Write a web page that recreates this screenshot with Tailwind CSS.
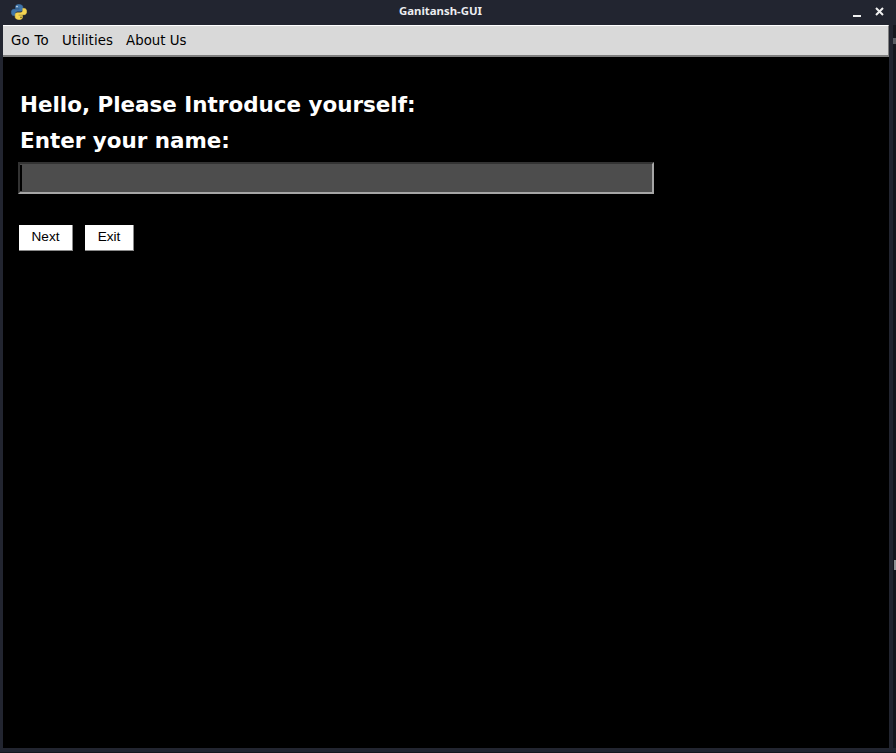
<!DOCTYPE html>
<html lang="en">
<head>
    <meta charset="UTF-8">
    <title>Ganitansh-GUI</title>
    <script src="https://cdn.jsdelivr.net/npm/@tailwindcss/browser@4"></script>
</head>
<body class="bg-[#1d2029] overflow-hidden">
    <div class="w-[896px] h-[753px] flex flex-col">
        <!-- title bar -->
        <div class="h-[25px] shrink-0 bg-[#222530] pr-[3px] relative flex items-center">
            <svg class="ml-[11px] mb-[2px] w-[16px] h-[16px]" viewBox="0 0 16 16">
                <path fill="#3f74a8" stroke="#3f74a8" stroke-width=".6" d="M8 0.5C5 0.5 4.6 1.6 4.6 3v1.6H8.2v.7H3C1.3 5.3.4 6.5.4 8.4c0 2 .9 3.2 2.4 3.2h1.4V9.7c0-1.4 1.1-2.5 2.6-2.5h3c1.2 0 2-.9 2-2V3c0-1.4-1.4-2.5-3.8-2.5z"/>
                <path fill="#f5d552" stroke="#f5d552" stroke-width=".6" d="M8 15.5c3 0 3.4-1.1 3.4-2.5v-1.6H7.8v-.7H13c1.7 0 2.6-1.2 2.6-3.1 0-2-.9-3.2-2.4-3.2h-1.4v1.9c0 1.4-1.1 2.5-2.6 2.5h-3c-1.2 0-2 .9-2 2V13c0 1.4 1.4 2.5 3.8 2.5z"/>
                <circle cx="6" cy="2.6" r=".8" fill="#dfe8f0"/>
                <circle cx="10" cy="13.4" r=".8" fill="#6b5d20"/>
            </svg>
            <span class="absolute left-0 w-[881px] text-center top-[3px] text-[11.4px] leading-[15px] font-bold text-[#eceef1] font-['Noto_Sans',sans-serif]">Ganitansh-GUI</span>
            <div class="ml-auto flex items-center gap-[13px] mr-[9px] mb-[2px]">
                <svg class="w-[9px] h-[9px] mt-[3px]" viewBox="0 0 9 9"><rect x="0" y="6" width="8" height="2" fill="#f0f0f0"/></svg>
                <svg class="w-[9px] h-[9px]" viewBox="0 0 9 9"><path d="M1 1l7 7M8 1l-7 7" stroke="#f0f0f0" stroke-width="2" fill="none"/></svg>
            </div>
        </div>

        <div class="flex-1 min-h-0 flex">
            <div class="w-[3px] bg-[#222530] shrink-0"></div>

            <!-- window -->
            <div class="w-[886px] shrink-0 flex flex-col bg-black">
                <div class="h-[32px] shrink-0 bg-[#d9d9d9] border-t border-t-white border-b-2 border-b-[#7f7f7f] border-r border-r-[#7f7f7f] flex items-center pl-[8px] gap-[13px] text-[13.33px] text-black font-['DejaVu_Sans',sans-serif]">
                    <span class="tracking-[0.25px]">Go To</span>
                    <span class="tracking-[0.1px]">Utilities</span>
                    <span>About Us</span>
                </div>

                <div class="flex-1 pl-[15px] pt-[33px] font-['DejaVu_Sans',sans-serif]">
                    <p class="pl-[2px] h-[36px] text-[21.45px] leading-[30px] font-bold text-white">Hello, Please Introduce yourself:</p>
                    <p class="pl-[2px] h-[36px] text-[21.45px] leading-[30px] font-bold text-white">Enter your name:</p>
                    <div class="relative w-[636px] h-[32px]">
                        <input type="text" class="block w-full h-full bg-[#4d4d4d] border-2 border-t-[#333333] border-l-[#333333] border-r-[#a6a6a6] border-b-[#a6a6a6] outline-none">
                        <span class="absolute left-[2px] top-[3px] w-[2px] h-[26px] bg-black"></span>
                    </div>
                    <div class="flex gap-[12px] mt-[31px] ml-[1px] font-['Liberation_Sans',sans-serif]">
                        <button class="w-[54px] h-[26px] pb-[1px] bg-white border-r border-b border-r-[#8a8a8a] border-b-[#8a8a8a] text-[13.6px] text-black">Next</button>
                        <button class="w-[49px] h-[26px] pb-[1px] bg-white border-r border-b border-r-[#8a8a8a] border-b-[#8a8a8a] text-[13.6px] text-black">Exit</button>
                    </div>
                </div>
            </div>

            <div class="w-[4px] bg-[#222530] shrink-0"></div>
            <div class="w-[3px] bg-[#15171e] shrink-0 relative">
                <span class="absolute left-0 top-[13px] w-[3px] h-[6px] bg-[#5a5d63]"></span>
                <span class="absolute left-[1px] top-[535px] w-[2px] h-[10px] bg-[#8c8f93]"></span>
            </div>
        </div>
        <div class="h-[5px] shrink-0 bg-[#222530] border-b border-b-[#15171e]"></div>
    </div>
</body>
</html>
